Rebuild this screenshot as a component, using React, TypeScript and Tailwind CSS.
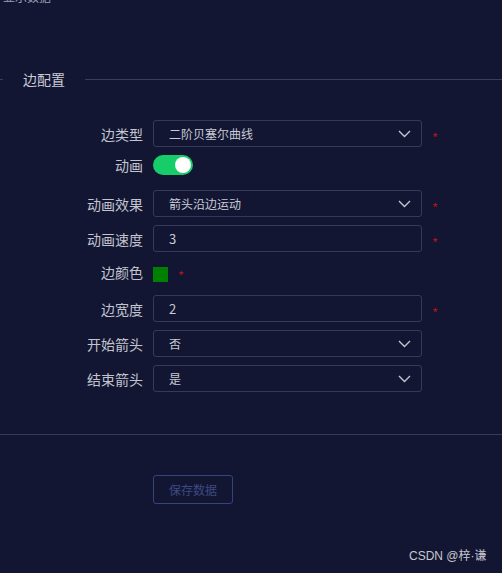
import { ReactNode } from "react";

const font = { fontFamily: '"Noto Sans CJK SC", "Noto Sans", sans-serif' };

const Chevron = () => (
  <svg width="13" height="8" viewBox="0 0 13 8" fill="none" className="text-[#c3c5d0]">
    <path d="M1 1l5.5 5.5L12 1" stroke="currentColor" strokeWidth="1.4" />
  </svg>
);

const Star = () => <span className="ml-[10px] mt-[7px] text-[13px] leading-none text-[#b3121d]">*</span>;

const Row = ({ label, children, star = true, align = "items-center" }: { label: string; children: ReactNode; star?: boolean; align?: string }) => (
  <div className={`flex h-[27px] ${align}`}>
    <div className="w-[143px] shrink-0 text-right text-[14px] leading-[20px] text-[#c2c4cf]">{label}</div>
    <div className="ml-[10px] flex items-center">
      {children}
      {star && <Star />}
    </div>
  </div>
);

const Select = ({ value }: { value: string }) => (
  <div className="flex h-[27px] w-[269px] items-center justify-between rounded-[3px] border border-[#363a5a] pl-[15px] pr-[10px] text-[12px] text-[#c9cbd5]">
    <span>{value}</span>
    <Chevron />
  </div>
);

const Input = ({ value }: { value: string }) => (
  <div className="flex h-[27px] w-[269px] items-center rounded-[3px] border border-[#363a5a] pl-[15px] text-[13px] text-[#c9cbd5]">
    {value}
  </div>
);

export default function App() {
  return (
    <div style={font} className="relative h-[573px] w-[502px] overflow-hidden bg-[#131633]">
      <div className="h-[4px] overflow-hidden pl-[3px]">
        <div className="-mt-[10px] text-[12px] leading-[14px] text-[#9a9cb0]">显示数据</div>
      </div>

      <div className="mt-[65px] flex items-center">
        <div className="h-px w-[3px] bg-[#3a3e5e]" />
        <div className="px-[20px] text-[14px] leading-[20px] text-[#c8cad4]">边配置</div>
        <div className="h-px flex-1 bg-[#3a3e5e]" />
      </div>

      <div className="mt-[31px] flex flex-col gap-[8px]">
        <Row label="边类型">
          <Select value="二阶贝塞尔曲线" />
        </Row>
        <Row label="动画" star={false} align="items-start">
          <div className="flex h-[20px] w-[40px] items-center justify-end rounded-full bg-[#17cd6a] px-[2px]">
            <div className="h-[16px] w-[16px] rounded-full bg-white" />
          </div>
        </Row>
        <Row label="动画效果">
          <Select value="箭头沿边运动" />
        </Row>
        <Row label="动画速度">
          <Input value="3" />
        </Row>
        <Row label="边颜色" align="items-start pt-[2px]">
          <div className="mt-[5px] flex items-center">
            <div className="h-[15px] w-[15px] bg-[#008000]" />
          </div>
        </Row>
        <Row label="边宽度">
          <Input value="2" />
        </Row>
        <Row label="开始箭头" star={false}>
          <Select value="否" />
        </Row>
        <Row label="结束箭头" star={false}>
          <Select value="是" />
        </Row>
      </div>

      <div className="mt-[42px] h-px w-full bg-[#363a5a]" />

      <div className="mt-[40px] pl-[153px]">
        <button className="h-[29px] w-[80px] rounded-[3px] border border-[#33447f] text-[12px] text-[#3d4a82]">
          保存数据
        </button>
      </div>

      <div
        style={{ fontFamily: '"Liberation Sans", "Noto Sans CJK SC", sans-serif' }}
        className="absolute left-[409px] top-[547px] text-[12px] leading-[18px] text-[#c7c8cf]"
      >
        CSDN @梓·谦
      </div>
    </div>
  );
}
